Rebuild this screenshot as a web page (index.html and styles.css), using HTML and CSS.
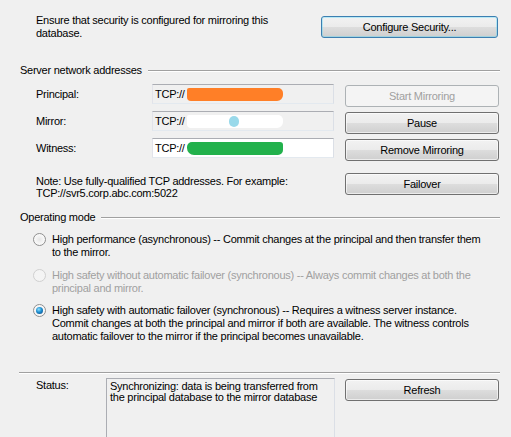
FILE: index.html
```html
<!DOCTYPE html>
<html>
<head>
<meta charset="utf-8">
<link rel="stylesheet" href="styles.css">
</head>
<body>
<div class="page">
  <div class="top">
    <div class="top-text">Ensure that security is configured for mirroring this database.</div>
    <button class="btn btn-default btn-config">Configure Security...</button>
  </div>

  <div class="group-head head-server"><span class="group-title">Server network addresses</span><span class="group-line"></span></div>

  <div class="addr-row">
    <div class="label">Principal:</div>
    <div class="box box-ro"><span class="tcp">TCP://</span><span class="blob blob-orange"></span></div>
    <button class="btn btn-disabled">Start Mirroring</button>
  </div>
  <div class="addr-row">
    <div class="label">Mirror:</div>
    <div class="box box-ro"><span class="tcp">TCP://</span><span class="blob blob-white"><span class="dot"></span></span></div>
    <button class="btn">Pause</button>
  </div>
  <div class="addr-row">
    <div class="label">Witness:</div>
    <div class="box box-white"><span class="tcp">TCP://</span><span class="blob blob-green"></span></div>
    <button class="btn">Remove Mirroring</button>
  </div>

  <div class="note-row">
    <div class="note">Note: Use fully-qualified TCP addresses. For example:<br>TCP://svr5.corp.abc.com:5022</div>
    <button class="btn">Failover</button>
  </div>

  <div class="group-head head-mode"><span class="group-title">Operating mode</span><span class="group-line"></span></div>

  <div class="radio-row r1">
    <span class="radio"></span>
    <div class="radio-text">High performance (asynchronous) -- Commit changes at the principal and then transfer them to the mirror.</div>
  </div>
  <div class="radio-row r2 disabled">
    <span class="radio"></span>
    <div class="radio-text">High safety without automatic failover (synchronous) -- Always commit changes at both the principal and mirror.</div>
  </div>
  <div class="radio-row r3">
    <span class="radio checked"></span>
    <div class="radio-text">High safety with automatic failover (synchronous) -- Requires a witness server instance. Commit changes at both the principal and mirror if both are available. The witness controls automatic failover to the mirror if the principal becomes unavailable.</div>
  </div>

  <div class="sep"></div>

  <div class="status-row">
    <div class="status-label">Status:</div>
    <div class="status-box">Synchronizing: data is being transferred from the principal database to the mirror database</div>
    <button class="btn">Refresh</button>
  </div>
</div>
</body>
</html>
```
FILE: styles.css
```css
html, body {
  margin: 0;
  padding: 0;
  background: #f0f0f0;
  height: 100%;
  overflow: hidden;
}
.page {
  font-family: "Liberation Sans", Arial, sans-serif;
  font-size: 11px;
  line-height: 13px;
  letter-spacing: -0.25px;
  color: #000;
  width: 511px;
  height: 437px;
}
.btn {
  font-family: "Liberation Sans", Arial, sans-serif;
  font-size: 11px;
  letter-spacing: -0.25px;
  color: #000;
  height: 22px;
  width: 154px;
  padding: 0;
  border: 1px solid #707070;
  border-radius: 3px;
  background: linear-gradient(to bottom, #f2f2f2 0%, #ebebeb 50%, #dddddd 51%, #cfcfcf 100%);
  box-shadow: inset 0 0 0 1px rgba(255,255,255,0.6);
  flex: none;
}
.btn-default {
  border-color: #3c7fb1;
  box-shadow: inset 0 0 0 1px #48d8fb55;
}
.btn-disabled {
  border-color: #adb2b5;
  background: #f4f4f4;
  color: #a0a0a0;
  box-shadow: none;
}
.top {
  display: flex;
  align-items: flex-start;
  padding: 14px 13px 0 36px;
  height: 38px;
}
.top-text {
  width: 250px;
}
.btn-config {
  margin-left: auto;
  margin-top: 2px;
  width: 177px;
}
.group-head {
  display: flex;
  align-items: center;
  padding: 0 11px 0 20px;
}
.head-server {
  margin-top: 12px;
  height: 13px;
}
.group-title {
  margin-right: 6px;
  white-space: nowrap;
}
.group-line {
  flex: 1;
  height: 0;
  border-top: 1px solid #a0a0a0;
  border-bottom: 1px solid #ffffff;
  margin-top: 1px;
}
.addr-row {
  display: flex;
  align-items: flex-start;
  padding-left: 36px;
  height: 23px;
  margin-bottom: 4px;
}
.head-server + .addr-row {
  margin-top: 7px;
}
.label {
  width: 116px;
  flex: none;
  padding-top: 4px;
}
.box {
  width: 182px;
  height: 20px;
  box-sizing: border-box;
  border: 1px solid #abadb3;
  border-left-color: #e2e3ea;
  border-right-color: #dbdfe6;
  border-bottom-color: #e3e9ef;
  display: flex;
  align-items: center;
  padding-left: 2px;
  flex: none;
}
.box-ro { background: #f0f0f0; }
.box-white { background: #ffffff; }
.tcp { white-space: nowrap; }
.blob {
  display: inline-block;
  width: 96px;
  height: 13px;
  border-radius: 2px 5px 6px 4px;
  margin-left: 2px;
  position: relative;
}
.blob-orange { background: #ff7f27; }
.blob-white { background: #ffffff; }
.blob-green { background: #22b14c; border-radius: 5px 3px 5px 7px; }
.dot {
  position: absolute;
  left: 42px;
  top: 1px;
  width: 10px;
  height: 11px;
  border-radius: 5px;
  background: #99d9ea;
}
.addr-row .btn {
  margin-left: 11px;
  margin-top: 1px;
}
.note-row {
  display: flex;
  align-items: flex-start;
  padding-left: 36px;
  margin-top: 12px;
  height: 36px;
}
.note {
  width: 309px;
  flex: none;
  padding-top: 2px;
  line-height: 12px;
}
.head-mode {
  margin-top: 2px;
  height: 13px;
}
.radio-row {
  display: flex;
  align-items: flex-start;
  padding-left: 33px;
  padding-right: 20px;
}
.r1 { margin-top: 9px; }
.r2 { margin-top: 10px; }
.r3 { margin-top: 9px; }
.radio {
  flex: none;
  width: 13px;
  height: 13px;
  box-sizing: border-box;
  border-radius: 50%;
  border: 1px solid #8f8f8f;
  background: radial-gradient(circle at 50% 50%, #e6e6e6 0%, #f4f4f4 45%, #ffffff 100%);
  margin-right: 6px;
  position: relative;
}
.radio.checked::after {
  content: "";
  position: absolute;
  left: 2px;
  top: 2px;
  width: 7px;
  height: 7px;
  border-radius: 50%;
  background: radial-gradient(circle at 40% 35%, #8fe0ff 0%, #1e8fd0 45%, #0a3d7a 100%);
}
.disabled .radio {
  border-color: #d0d0d0;
  background: #f4f4f4;
}
.disabled .radio-text { color: #a0a0a0; }
.radio-text { flex: 1; }
.sep {
  margin: 29px 11px 0 19px;
  border-top: 1px solid #a0a0a0;
  border-bottom: 1px solid #ffffff;
}
.status-row {
  display: flex;
  align-items: flex-start;
  padding-left: 36px;
  margin-top: 4px;
}
.status-label {
  width: 70px;
  flex: none;
  padding-top: 1px;
}
.status-box {
  width: 229px;
  height: 70px;
  box-sizing: border-box;
  flex: none;
  border: 1px solid #abadb3;
  border-right-color: #dbdfe6;
  padding: 2px 3px;
  line-height: 11px;
}
.status-row .btn {
  margin-left: 10px;
  margin-top: 1px;
}
```
